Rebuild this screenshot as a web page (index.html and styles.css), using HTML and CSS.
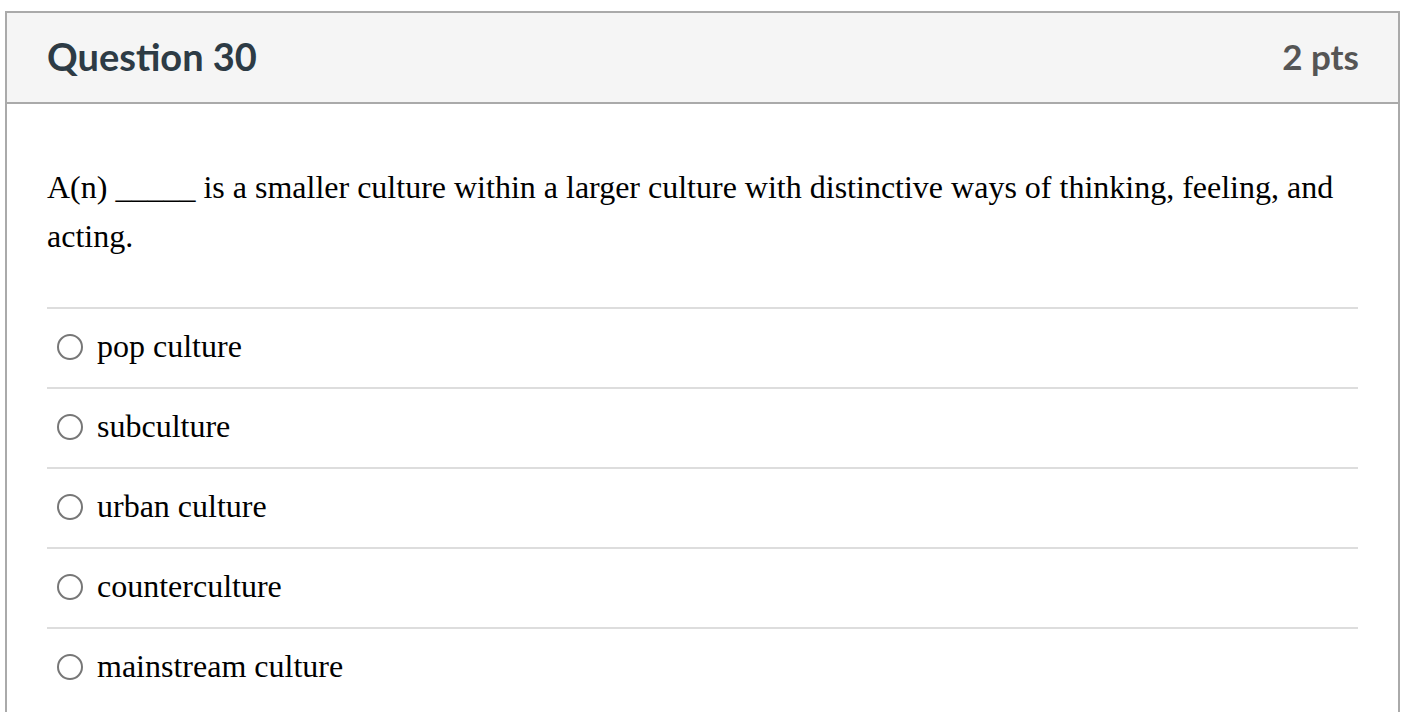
FILE: index.html
```html
<!DOCTYPE html>
<html>
<head>
<meta charset="utf-8">
<link rel="stylesheet" href="styles.css">
</head>
<body>
<div class="question">
  <div class="header">
    <h2 class="title">Question 30</h2>
    <div class="pts">2 pts</div>
  </div>
  <div class="content">
    <p class="text">A(n) _____ is a smaller culture within a larger culture with distinctive ways of thinking, feeling, and acting.</p>
    <div class="answers">
      <label class="answer"><span class="radio"></span><span class="label">pop culture</span></label>
      <label class="answer"><span class="radio"></span><span class="label">subculture</span></label>
      <label class="answer"><span class="radio"></span><span class="label">urban culture</span></label>
      <label class="answer"><span class="radio"></span><span class="label">counterculture</span></label>
      <label class="answer"><span class="radio"></span><span class="label">mainstream culture</span></label>
    </div>
  </div>
</div>
</body>
</html>
```

FILE: styles.css
```css
html, body {
  margin: 0;
  padding: 0;
  background: #fff;
}
body {
  padding: 11px 15px 0 5px;
}
.question {
  border: 2px solid #aaaaaa;
  border-bottom: none;
  height: 720px;
  box-sizing: border-box;
}
.header {
  background: #f5f5f5;
  border-bottom: 2px solid #aaaaaa;
  height: 91px;
  box-sizing: border-box;
  padding: 0 39px 3px 40px;
  display: flex;
  align-items: center;
  justify-content: space-between;
  font-family: Lato, "Liberation Sans", sans-serif;
}
.title {
  margin: 0;
  font-size: 38px;
  font-weight: 700;
  color: #2d3b45;
}
.pts {
  font-size: 35px;
  font-weight: 700;
  color: #555555;
}
.content {
  padding: 59px 40px 0 40px;
  font-family: "Liberation Serif", "Times New Roman", serif;
  color: #000;
}
.text {
  margin: 0 0 46px 0;
  font-size: 32px;
  line-height: 49px;
}
.answers {
  display: flex;
  flex-direction: column;
}
.answer {
  display: flex;
  align-items: center;
  height: 78px;
  box-sizing: content-box;
  border-top: 2px solid #dddddd;
  padding-left: 10px;
  font-size: 32px;
}
.radio {
  width: 22px;
  height: 22px;
  border: 2px solid #777777;
  border-radius: 50%;
  flex: none;
  margin-right: 14px;
  margin-bottom: 2px;
}
.label {
  line-height: 36px;
  margin-bottom: 4px;
}
```
